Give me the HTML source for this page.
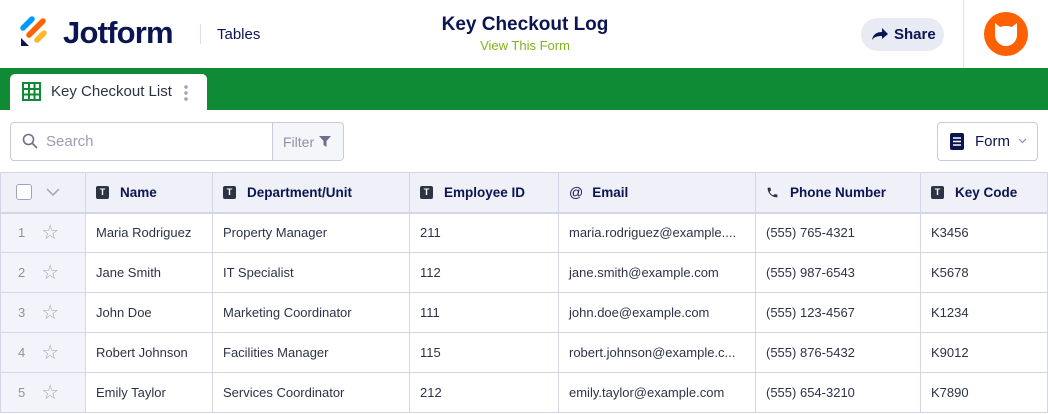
<!DOCTYPE html>
<html><head><meta charset="utf-8"><style>
*{box-sizing:border-box;margin:0;padding:0}
body{width:1048px;height:414px;overflow:hidden;background:#fff;font-family:"Liberation Sans",sans-serif;color:#0a1551;position:relative}
.abs{position:absolute}
.top{left:0;top:0;width:1048px;height:68px;background:#fff}
.green{left:0;top:68px;width:1048px;height:42px;background:#0f8a35}
.tab{left:10px;top:74px;width:197px;height:36px;background:#fff;border-radius:5px 5px 0 0}
table{position:absolute;left:0;top:172px;border-collapse:collapse;font-size:13px;color:#2c3345;table-layout:fixed}
td,th{height:40px;border:1px solid #d3d6e4;padding:0 10px;text-align:left;white-space:nowrap;overflow:hidden;vertical-align:middle}
th{background:#eff0f8;font-weight:bold;color:#0a1551;font-size:13.5px;border-bottom:2px solid #d3d6e4}
th .h{display:flex;align-items:center}
td.n{background:#f3f4fb;color:#8d91a5;font-size:13px;padding-left:17px}
.T{display:inline-block;width:13px;height:13px;background:#2c3345;border-radius:2px;color:#fff;font-size:9px;text-align:center;line-height:13px;margin-right:11px;flex:none}
.star{color:#a0a4b8;font-size:20px;margin-left:16px;vertical-align:-2px}
</style></head><body>
<div class="abs top"></div>
<div class="abs" style="left:963px;top:0;width:1px;height:68px;background:#e4e5ec"></div>
<svg class="abs" style="left:19px;top:16px" width="32" height="32" viewBox="0 0 32 32">
<line x1="4" y1="12" x2="13" y2="3" stroke="#0099ff" stroke-width="5.5" stroke-linecap="round"/>
<line x1="10" y1="19" x2="24" y2="5" stroke="#ff6100" stroke-width="5.5" stroke-linecap="round"/>
<line x1="18" y1="24" x2="25" y2="17" stroke="#ffb629" stroke-width="5.5" stroke-linecap="round"/>
<path d="M2 22 L2 30 L10 30 Z" fill="#0a1551"/>
</svg>
<div class="abs" style="left:63px;top:15px;font-size:31px;font-weight:bold;color:#0a1551;letter-spacing:-0.8px">Jotform</div>
<div class="abs" style="left:200px;top:24px;width:1px;height:20px;background:#dadce6"></div>
<div class="abs" style="left:217px;top:26px;font-size:15px;color:#0a1551">Tables</div>
<div class="abs" style="left:400px;top:14px;width:250px;text-align:center;font-size:19px;font-weight:bold;color:#0a1551">Key Checkout Log</div>
<div class="abs" style="left:400px;top:38px;width:250px;text-align:center;font-size:13px;color:#7cb518">View This Form</div>
<div class="abs" style="left:861px;top:18px;width:83px;height:33px;border-radius:17px;background:#e8eaf4;font-size:15px;font-weight:bold;color:#0a1551;line-height:33px;padding-left:33px">Share</div>
<svg class="abs" style="left:871px;top:27px" width="18" height="14" viewBox="0 0 18 14"><path d="M1 13 C2 7 6 5 11 5 L11 1 L17 7 L11 12 L11 9 C6 9 3 10 1 13Z" fill="#0a1551"/></svg>
<svg class="abs" style="left:984px;top:12px" width="44" height="44" viewBox="0 0 44 44"><circle cx="22" cy="22" r="22" fill="#ff6100"/><path d="M11 11 L16 15 Q22 13 28 15 L33 11 L33 23 A11 11 0 0 1 11 23Z" fill="#fff"/><circle cx="22" cy="24" r="10" fill="#fff"/></svg>
<div class="abs green"></div>
<div class="abs tab"></div>
<svg class="abs" style="left:22px;top:82px" width="19" height="19" viewBox="0 0 19 19" fill="none" stroke="#0f8a35" stroke-width="2"><rect x="1" y="1" width="17" height="17"/><path d="M1 7H18M1 12.5H18M7 1V18M12.5 1V18"/></svg>
<div class="abs" style="left:51px;top:83px;font-size:15px;color:#2c3345">Key Checkout List</div>
<div class="abs" style="left:184px;top:84px;width:4px;height:18px;background:radial-gradient(circle,#a0a4b8 1.6px,transparent 2px) 0 0/4px 6px"></div>
<div class="abs" style="left:10px;top:122px;width:334px;height:39px;border:1px solid #c8cbd8;border-radius:4px"></div>
<div class="abs" style="left:272px;top:123px;width:1px;height:37px;background:#c8cbd8"></div>
<div class="abs" style="left:273px;top:123px;width:70px;height:37px;background:#f5f6fa;border-radius:0 4px 4px 0"></div>
<svg class="abs" style="left:22px;top:133px" width="16" height="16" viewBox="0 0 16 16" fill="none" stroke="#6c7088" stroke-width="1.6"><circle cx="6.5" cy="6.5" r="5"/><path d="M10.5 10.5L15 15"/></svg>
<div class="abs" style="left:46px;top:133px;font-size:15px;color:#9a9eb2">Search</div>
<div class="abs" style="left:283px;top:134px;font-size:14px;color:#8d91a5">Filter</div>
<svg class="abs" style="left:319px;top:136px" width="12" height="11" viewBox="0 0 12 11"><path d="M0 0H12L7.5 5V11L4.5 9V5Z" fill="#6c7088"/></svg>
<div class="abs" style="left:937px;top:122px;width:101px;height:39px;border:1px solid #c8cbd8;border-radius:4px"></div>
<svg class="abs" style="left:950px;top:133px" width="14" height="17" viewBox="0 0 14 17"><rect width="14" height="17" rx="2" fill="#0a1551"/><path d="M3 5H11M3 8.5H11M3 12H11" stroke="#fff" stroke-width="1.4"/></svg>
<div class="abs" style="left:975px;top:133px;font-size:15px;color:#0a1551">Form</div>
<svg class="abs" style="left:1018px;top:138px" width="9" height="6" viewBox="0 0 9 6"><path d="M1 1L4.5 4.5L8 1" stroke="#8d91a5" fill="none" stroke-width="1.2"/></svg>
<table>
<colgroup><col style="width:85px"><col style="width:127px"><col style="width:197px"><col style="width:149px"><col style="width:197px"><col style="width:165px"><col style="width:127px"></colgroup>
<tr><th style="padding-left:15px"><div class="h"><span style="display:inline-block;width:16px;height:16px;border:1.5px solid #a0a4b8;border-radius:3px;background:#fff"></span><svg style="margin-left:14px" width="14" height="8" viewBox="0 0 14 8"><path d="M1 1L7 7L13 1" stroke="#a0a4b8" fill="none" stroke-width="1.5"/></svg></div></th>
<th><div class="h"><span class="T">T</span>Name</div></th><th><div class="h"><span class="T">T</span>Department/Unit</div></th><th><div class="h"><span class="T">T</span>Employee ID</div></th>
<th><div class="h"><span style="font-weight:normal;margin-right:9px;font-size:14px">@</span>Email</div></th>
<th><div class="h"><svg style="margin-right:11px" width="13" height="13" viewBox="0 0 24 24"><path d="M6.6 10.8c1.4 2.8 3.8 5.1 6.6 6.6l2.2-2.2c.3-.3.7-.4 1-.2 1.1.4 2.3.6 3.6.6.6 0 1 .4 1 1V20c0 .6-.4 1-1 1C10.6 21 3 13.4 3 4c0-.6.4-1 1-1h3.5c.6 0 1 .4 1 1 0 1.3.2 2.5.6 3.6.1.3 0 .7-.2 1z" fill="#2c3345"/></svg>Phone Number</div></th><th><div class="h"><span class="T">T</span>Key Code</div></th></tr>
<tr><td class="n">1<span class="star">☆</span></td><td>Maria Rodriguez</td><td>Property Manager</td><td>211</td><td>maria.rodriguez@example....</td><td>(555) 765-4321</td><td>K3456</td></tr>
<tr><td class="n">2<span class="star">☆</span></td><td>Jane Smith</td><td>IT Specialist</td><td>112</td><td>jane.smith@example.com</td><td>(555) 987-6543</td><td>K5678</td></tr>
<tr><td class="n">3<span class="star">☆</span></td><td>John Doe</td><td>Marketing Coordinator</td><td>111</td><td>john.doe@example.com</td><td>(555) 123-4567</td><td>K1234</td></tr>
<tr><td class="n">4<span class="star">☆</span></td><td>Robert Johnson</td><td>Facilities Manager</td><td>115</td><td>robert.johnson@example.c...</td><td>(555) 876-5432</td><td>K9012</td></tr>
<tr><td class="n">5<span class="star">☆</span></td><td>Emily Taylor</td><td>Services Coordinator</td><td>212</td><td>emily.taylor@example.com</td><td>(555) 654-3210</td><td>K7890</td></tr>
</table>
</body></html>
